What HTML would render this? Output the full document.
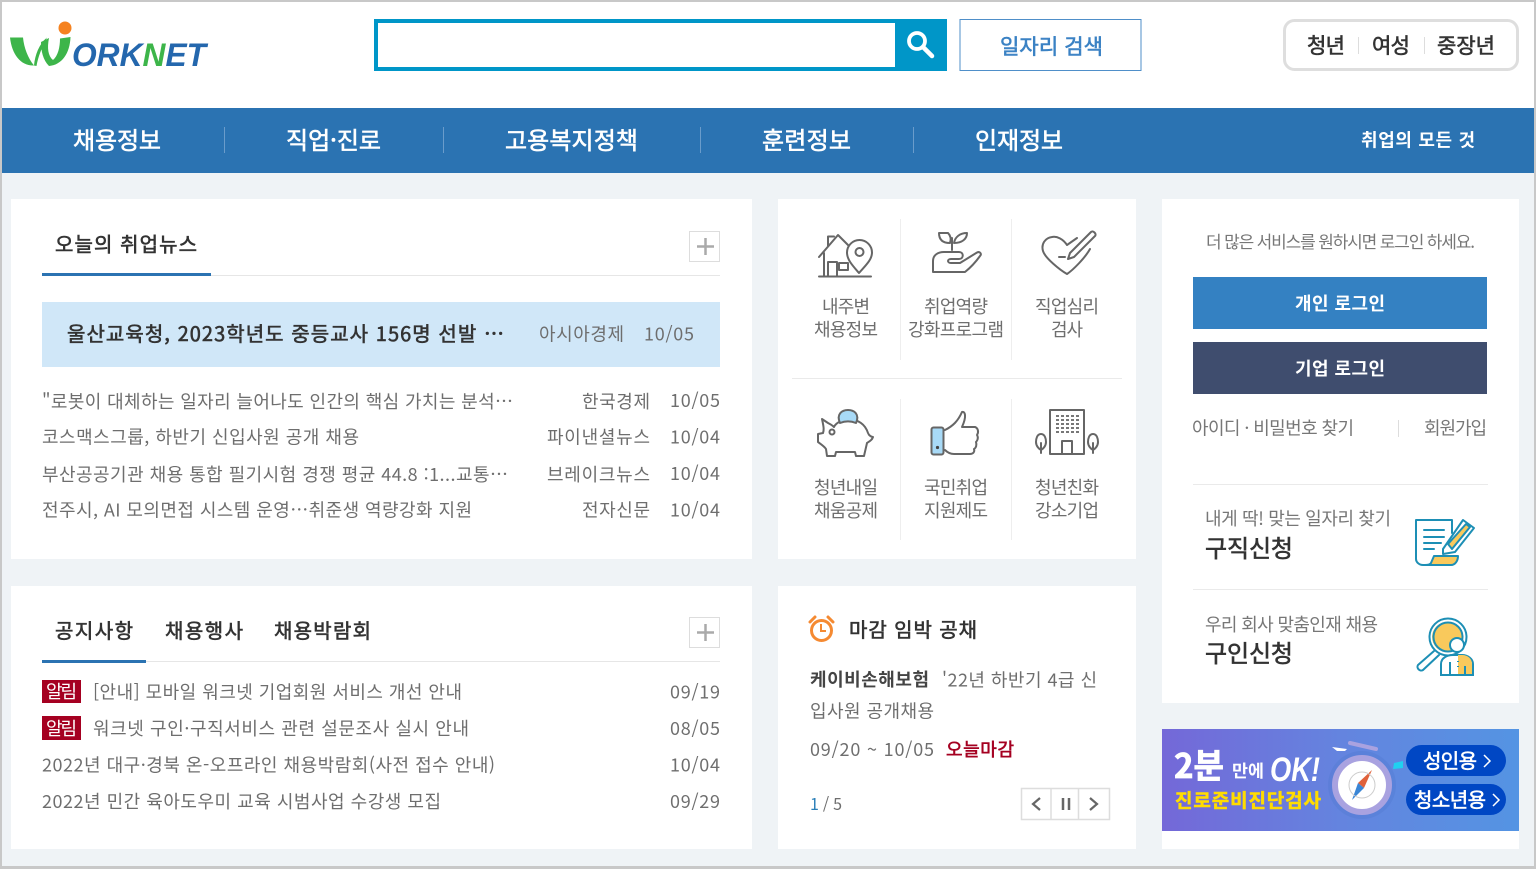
<!DOCTYPE html>
<html lang="ko"><head><meta charset="utf-8"><title>WORKNET</title>
<style>
html,body{margin:0;padding:0;width:1536px;height:869px;overflow:hidden;background:#eff3f6}
svg{display:block}
text{font-family:"Noto Sans CJK KR","Liberation Sans",sans-serif;fill:#6e6e6e;font-size:18px;white-space:pre;transform:translateY(.8px)}
text.n{transform:none}
.m{stroke-width:.6px}
.ic{fill:none;stroke:#666;stroke-width:2;stroke-linecap:round;stroke-linejoin:round}
.t{fill:none;stroke:#1d8fb5;stroke-width:2;stroke-linejoin:round;stroke-linecap:round}
</style></head><body>
<svg width="1536" height="869" viewBox="0 0 1536 869" xmlns="http://www.w3.org/2000/svg">
<defs><linearGradient id="g" x1="0" x2="1" y1="0" y2="0"><stop offset="0" stop-color="#7468d8"/><stop offset=".5" stop-color="#6484df"/><stop offset="1" stop-color="#5494e3"/></linearGradient></defs>
<rect width="1536" height="869" fill="#eff3f6"/>
<rect x="2" y="2" width="1532" height="106" fill="#fff"/>
<rect x="2" y="108" width="1532" height="65" fill="#2b73b2"/>

<!-- logo -->
<circle cx="65" cy="28" r="6.500" fill="#f58220"/>
<path fill="#3db54a" d="M10 37.500L23 37.500C24 48 28 58 34 65.500C21 66 12 55 10 37.500Z"/>
<path fill="#3db54a" d="M34 65.500C35 55 39 44 47 37.500C42 47 38 57 36.500 66Z"/>
<path fill="#3db54a" d="M41 42L49 38C47 48 48 56 53 60C58 56 60 47 60 38.500L70.500 37C70 53 62 65 49 66C43 60 41 51 41 42Z"/>
<text x="72" y="65" textLength="134" lengthAdjust="spacingAndGlyphs" style="font-family:'Liberation Sans',sans-serif;font-style:italic;font-size:32px;font-weight:700;fill:#2467ad">ORK<tspan style="fill:#3db54a">N</tspan>ET</text>

<!-- search -->
<rect x="376" y="21" width="569" height="48" fill="#fff" stroke="#0096c8" stroke-width="4"/>
<rect x="895" y="19" width="52" height="52" fill="#0096c8"/>
<circle cx="917" cy="41" r="8" fill="none" stroke="#fff" stroke-width="3.800"/>
<path d="M923 47L932 56" stroke="#fff" stroke-width="4.500" stroke-linecap="round"/>
<rect x="960" y="19.500" width="181" height="51" fill="#fff" stroke="#4f8fc9"/>
<text x="1000" y="53" textLength="103" class="m" style="font-size:21px;fill:#3b82c4;stroke:#3b82c4">일자리 검색</text>
<rect x="1284.500" y="20.500" width="233" height="49" rx="10" fill="#fff" stroke="#dedede" stroke-width="3"/>
<text x="1307" y="53" textLength="38" class="m n" style="font-size:21px;fill:#333;stroke:#333">청년</text>
<text x="1372" y="53" textLength="38" class="m n" style="font-size:21px;fill:#333;stroke:#333">여성</text>
<text x="1437" y="53" textLength="58" class="m n" style="font-size:21px;fill:#333;stroke:#333">중장년</text>
<path d="M1358.500 37v17M1424.500 37v17" stroke="#ddd"/>

<!-- nav -->
<text x="73" y="148" textLength="88" class="m" style="font-size:24px;fill:#fff;stroke:#fff">채용정보</text>
<text x="286" y="148" textLength="95" class="m" style="font-size:24px;fill:#fff;stroke:#fff">직업·진로</text>
<text x="505" y="148" textLength="133" class="m" style="font-size:24px;fill:#fff;stroke:#fff">고용복지정책</text>
<text x="762" y="148" textLength="89" class="m" style="font-size:24px;fill:#fff;stroke:#fff">훈련정보</text>
<text x="975" y="148" textLength="88" class="m" style="font-size:24px;fill:#fff;stroke:#fff">인재정보</text>
<text x="1361" y="146.500" textLength="114" class="n" style="font-size:18px;fill:#fff;font-weight:700">취업의 모든 것</text>
<path d="M224.500 127v26M443.500 127v26M700.500 127v26M913.500 127v26" stroke="#6a9ccb"/>

<!-- cards -->
<g fill="#fff">
<rect x="11" y="199" width="741" height="360"/>
<rect x="778" y="199" width="358" height="360"/>
<rect x="1162" y="199" width="357" height="504"/>
<rect x="11" y="586" width="741" height="263"/>
<rect x="778" y="586" width="358" height="263"/>
<rect x="1162" y="729" width="357" height="120"/>
</g>

<!-- news -->
<text x="55" y="251.500" textLength="142" class="m n" style="font-size:20px;fill:#333;stroke:#333">오늘의 취업뉴스</text>
<path d="M42 275.500H720" stroke="#e6e6e6"/>
<rect x="42" y="273" width="169" height="3" fill="#2b73b2"/>
<rect x="689.500" y="231.500" width="30" height="30" fill="#fff" stroke="#ddd"/>
<path d="M697 246.500H714M705.500 238V255" stroke="#aaa" stroke-width="2.500"/>
<rect x="42" y="302" width="678" height="65" fill="#d0e7f8"/>
<text x="67" y="341" textLength="437" class="m n" style="font-size:20px;fill:#333;stroke:#333">울산교육청, 2023학년도 중등교사 156명 선발 …</text>
<text x="539" y="340.500" textLength="85" class="n">아시아경제</text>
<text x="644" y="340.500" textLength="50" class="n">10/05</text>
<text x="42" y="407" textLength="471">"로봇이 대체하는 일자리 늘어나도 인간의 핵심 가치는 분석…</text>
<text x="582" y="407" textLength="68">한국경제</text><text x="670" y="407" textLength="50" class="n">10/05</text>
<text x="42" y="443.500" textLength="317" class="n">코스맥스그룹, 하반기 신입사원 공개 채용</text>
<text x="547" y="443.500" textLength="103" class="n">파이낸셜뉴스</text><text x="670" y="443.500" textLength="50" class="n">10/04</text>
<text x="42" y="480" textLength="466">부산공공기관 채용 통합 필기시험 경쟁 평균 44.8 :1...교통…</text>
<text x="547" y="480" textLength="103">브레이크뉴스</text><text x="670" y="480" textLength="50" class="n">10/04</text>
<text x="42" y="516.500" textLength="430" class="n">전주시, AI 모의면접 시스템 운영…취준생 역량강화 지원</text>
<text x="582" y="516.500" textLength="68" class="n">전자신문</text><text x="670" y="516.500" textLength="50" class="n">10/04</text>

<!-- notices -->
<text x="55" y="638" textLength="78" class="m n" style="font-size:20px;fill:#333;stroke:#333">공지사항</text>
<text x="165" y="638" textLength="78" class="m n" style="font-size:20px;fill:#333;stroke:#333">채용행사</text>
<text x="274" y="638" textLength="97" class="m n" style="font-size:20px;fill:#333;stroke:#333">채용박람회</text>
<path d="M42 661.500H720" stroke="#e6e6e6"/>
<rect x="42" y="660" width="104" height="3" fill="#2b73b2"/>
<rect x="689.500" y="617.500" width="30" height="30" fill="#fff" stroke="#ddd"/>
<path d="M697 632.500H714M705.500 624V641" stroke="#aaa" stroke-width="2.500"/>
<rect x="42" y="680" width="39" height="23" fill="#a50021"/>
<text x="46" y="698" textLength="31" class="n" style="fill:#fff">알림</text>
<text x="93" y="698.500" textLength="369" class="n">[안내] 모바일 워크넷 기업회원 서비스 개선 안내</text>
<text x="670" y="698.500" textLength="50" class="n">09/19</text>
<rect x="42" y="716" width="39" height="24" fill="#a50021"/>
<text x="46" y="735" textLength="31" class="n" style="fill:#fff">알림</text>
<text x="93" y="735" textLength="376" class="n">워크넷 구인·구직서비스 관련 설문조사 실시 안내</text>
<text x="670" y="735" textLength="50" class="n">08/05</text>
<text x="42" y="771.500" textLength="453" class="n">2022년 대구·경북 온-오프라인 채용박람회(사전 접수 안내)</text>
<text x="670" y="771.500" textLength="50" class="n">10/04</text>
<text x="42" y="808" textLength="399" class="n">2022년 민간 육아도우미 교육 시범사업 수강생 모집</text>
<text x="670" y="808" textLength="50" class="n">09/29</text>

<!-- icon grid -->
<path d="M900.500 219v141M1011.500 219v141M900.500 399v141M1011.500 399v141" stroke="#eee"/>
<path d="M792 378.500H1122" stroke="#eaeaea"/>
<g class="ic">
<path d="M819 257L838 235L851 248M828 246V236.500H834M824 253V276M819 276.500H871M828 276V262H837V276M839 263H848V270H839Z"/>
<path d="M859 273C853 266 847 260 847 252.500A12.500 12.500 0 0 1 872 252.500C872 260 865 266 859 273Z" fill="#fff"/>
<circle cx="859.500" cy="252" r="4"/>
<path d="M952 250V238M950 243C943 243 939 240 939 233H948C951 236 951 240 950 243ZM954 243C955 237 960 233 967 233C967 239 962 243 954 243Z"/>
<path d="M933 272V261C933 255 938 252 944 252H959C964 252 964 259 959 259H951C947 259 947 263 951 263H960L977 252.500C980 251 982 254 980 256C975 263 970 268 965 272Z"/>
<path d="M1067 245C1063 239 1057 236 1052 237C1045 238 1041 244 1043 251C1045 258 1060 270 1067 274C1073 270 1085 258 1090 249M1067 245L1077 238M1059 257H1065"/>
<path d="M1070 253L1091 232C1093 230 1097 234 1095 236L1074 257L1068 259Z" fill="#fff"/>
<path d="M834 427C838 418 862 414 868 433C869 436 872 437 873 437C872 440 870 441 867 443L864 456H856L855 452H836L835 456H827L826 449C824 446 819 443 818 442V434L823 433C824 430 824 428 822 419L828 423C830 424 832 425 834 427Z"/>
<circle cx="832" cy="432" r="2.500"/>
<path d="M945 430C953 426 958 421 962 412C965 411 967 416 962 427H975C978 428 979 432 977 435C979 438 977 441 976 442C977 445 976 448 974 449C975 452 973 454 970 454H954C950 454 947 452 945 450"/>
<path d="M1050 410H1084V454H1050ZM1062 454V441H1072V454"/>
<path d="M1041 434C1037 434 1036 439 1036 442C1036 446 1039 449 1041 450C1043 449 1046 446 1046 442C1046 439 1045 434 1041 434ZM1041 443V453M1093 434C1089 434 1088 439 1088 442C1088 446 1091 449 1093 450C1095 449 1098 446 1098 442C1098 439 1097 434 1093 434ZM1093 443V453"/>
</g>
<path d="M840 423C836 414 842 410 848 410C854 410 860 414 856 423C851 421 845 421 840 423Z" fill="#a8daf7" stroke="#666" stroke-width="2" stroke-linejoin="round"/>
<rect x="931.500" y="427.500" width="12" height="27" rx="2" fill="#a8daf7" stroke="#666" stroke-width="2"/>
<circle cx="937.500" cy="447.500" r="1.600" fill="#444"/>
<path d="M1056 416H1079M1056 420H1079M1056 424H1079M1056 428H1079M1056 432H1079" stroke="#777" stroke-width="2" stroke-dasharray="3 2"/>

<text x="822" y="313" textLength="48" class="n">내주변</text>
<text x="814" y="336" textLength="64" class="n">채용정보</text>
<text x="924" y="313" textLength="64" class="n">취업역량</text>
<text x="908" y="336" textLength="96" class="n">강화프로그램</text>
<text x="1035" y="313" textLength="64" class="n">직업심리</text>
<text x="1051" y="336" textLength="32" class="n">검사</text>
<text x="814" y="494" textLength="64" class="n">청년내일</text>
<text x="814" y="517" textLength="64" class="n">채움공제</text>
<text x="924" y="494" textLength="64" class="n">국민취업</text>
<text x="924" y="517" textLength="64" class="n">지원제도</text>
<text x="1035" y="494" textLength="64" class="n">청년친화</text>
<text x="1035" y="517" textLength="64" class="n">강소기업</text>

<!-- deadline -->
<circle cx="821.500" cy="630.500" r="10" fill="none" stroke="#f58a32" stroke-width="3"/>
<path d="M810 622L815 617M833 622L828 617" stroke="#f58a32" stroke-width="3" stroke-linecap="round"/>
<path d="M821 624V631H826" fill="none" stroke="#f58a32" stroke-width="2"/>
<text x="849" y="637" textLength="128" class="m n" style="font-size:20px;fill:#333;stroke:#333">마감 임박 공채</text>
<text x="810" y="686" textLength="119" class="n" style="fill:#444;font-weight:700">케이비손해보험</text>
<text x="942" y="686.500" textLength="155" class="n">'22년 하반기 4급 신</text>
<text x="810" y="717.500" textLength="124" class="n">입사원 공개채용</text>
<text x="810" y="756" textLength="124" class="n">09/20 ~ 10/05</text>
<text x="946" y="756" textLength="68" class="m n" style="fill:#a50021;stroke:#a50021">오늘마감</text>
<text x="810" y="810" textLength="32" class="n" style="font-size:16px"><tspan style="fill:#2b7fb8">1</tspan> / 5</text>
<rect x="1021.500" y="788.500" width="88" height="31" fill="#fff" stroke="#ddd" stroke-width="1.500"/>
<path d="M1051 788v32M1078.500 788v32" stroke="#ddd" stroke-width="1.500"/>
<path d="M1040 798L1033 804L1040 810M1090 798L1097 804L1090 810" fill="none" stroke="#666" stroke-width="2.200"/>
<path d="M1063 798v12M1069 798v12" stroke="#666" stroke-width="2.500"/>

<!-- login -->
<text x="1206" y="247" textLength="269" style="font-size:17px;fill:#777">더 많은 서비스를 원하시면 로그인 하세요.</text>
<rect x="1193" y="277" width="294" height="52" fill="#3481c2"/>
<rect x="1193" y="342" width="294" height="52" fill="#3f4d6e"/>
<text x="1295" y="309" textLength="90" style="fill:#fff;font-weight:700">개인 로그인</text>
<text x="1295" y="374" textLength="90" style="fill:#fff;font-weight:700">기업 로그인</text>
<text x="1192" y="434.500" textLength="162" class="n" style="fill:#777">아이디 · 비밀번호 찾기</text>
<text x="1424" y="434.500" textLength="63" class="n" style="fill:#777">회원가입</text>
<path d="M1398.500 420v17" stroke="#ddd"/>
<path d="M1193 484.500H1488M1193 589.500H1488" stroke="#eaeaea"/>
<text x="1205" y="524" textLength="186" style="fill:#777">내게 딱! 맞는 일자리 찾기</text>
<text x="1205" y="557" textLength="88" class="m n" style="font-size:24px;fill:#333;stroke:#333">구직신청</text>
<text x="1205" y="630" textLength="173" style="fill:#777">우리 회사 맞춤인재 채용</text>
<text x="1205" y="662" textLength="88" class="m n" style="font-size:24px;fill:#333;stroke:#333">구인신청</text>
<!-- doc icon -->
<path d="M1430 564L1434 556H1458L1456 561C1455 563 1453 564 1451 564Z" fill="#f9c95c"/>
<g class="t">
<path d="M1416 520H1452V533M1416 520V559C1416 562 1419 565 1423 565H1451C1455 565 1458 561 1458 556H1434L1431 563C1430 565 1427 565 1425 565M1424 530H1444M1424 537H1444M1424 543H1441M1424 549H1434"/>
<path d="M1443 549L1463 520L1474 528L1455 552L1443 554Z" fill="#fff"/>
<path d="M1448 544L1466 524L1470 527L1452 549Z" fill="#f9c95c"/>
</g>
<!-- person icon -->
<circle cx="1447" cy="637" r="15" fill="#f9c95c"/>
<g class="t">
<circle cx="1448" cy="637" r="18.500"/><circle cx="1448" cy="637" r="14.500"/>
<path d="M1434 651L1418 665C1416 668 1420 672 1423 670L1439 655"/>
</g>
<circle cx="1457" cy="645" r="7" fill="#fff" stroke="#1d8fb5" stroke-width="2"/>
<path d="M1441 675V664C1441 658 1447 655 1453 655H1462C1468 655 1473 659 1473 664V675Z" fill="#fff" stroke="#1d8fb5" stroke-width="2"/>
<path d="M1458 655H1462C1468 655 1472 659 1472 664V674H1458Z" fill="#f9c95c"/>
<path d="M1450 662V675M1465 666V675M1458 661v1M1458 666v1" stroke="#1d8fb5" stroke-width="2" fill="none"/>

<!-- banner -->
<rect x="1162" y="729" width="357" height="102" fill="url(#g)"/>
<text x="1174" y="777" textLength="50" lengthAdjust="spacingAndGlyphs" style="font-size:34px;fill:#fff;stroke:#fff;stroke-width:.8px;font-weight:700">2분</text>
<text x="1232" y="776" textLength="32" lengthAdjust="spacingAndGlyphs" style="font-size:17px;fill:#fff;font-weight:700">만에</text>
<text x="1270" y="780" textLength="50" lengthAdjust="spacingAndGlyphs" style="font-family:'Liberation Sans',sans-serif;font-size:34px;fill:#fff;font-weight:700;font-style:italic">OK!</text>
<text x="1175" y="806" textLength="146" style="font-size:19px;fill:#ffdc00;stroke:#ffdc00;stroke-width:.5px;font-weight:700">진로준비진단검사</text>
<circle cx="1362" cy="785" r="34" fill="#4f78cf" opacity=".35"/>
<circle cx="1362" cy="785" r="27" fill="#fff" stroke="#a9a2e0" stroke-width="6"/>
<path d="M1350 743L1376 749" stroke="#a9a2e0" stroke-width="4" stroke-linecap="round"/>
<path d="M1332 747L1347 749L1345 751L1337 751Z" fill="#fff"/>
<path d="M1394 763L1403 761L1403 768L1393 769Z" fill="#20d0f0"/>
<path d="M1372 770L1364 788L1358 783Z" fill="#e0623c"/>
<path d="M1352 800L1358 783L1364 788Z" fill="#3a86d6"/>
<circle cx="1362" cy="785" r="13" fill="none" stroke="#ccc" stroke-width="1"/>
<rect x="1406" y="745" width="100" height="31" rx="15.500" fill="#0047c4"/>
<rect x="1406" y="784" width="100" height="31" rx="15.500" fill="#0047c4"/>
<text x="1423" y="768" textLength="54" class="m n" style="font-size:20px;fill:#fff;stroke:#fff">성인용</text>
<text x="1414" y="807" textLength="72" class="m n" style="font-size:20px;fill:#fff;stroke:#fff">청소년용</text>
<path d="M1484 755L1490 761L1484 767M1493 794L1499 800L1493 806" fill="none" stroke="#fff" stroke-width="1.500"/>

<!-- frame -->
<rect x="1" y="1" width="1534" height="866" fill="none" stroke="#c8c8c8" stroke-width="2"/>
<rect x="0" y="866" width="1536" height="3" fill="#c8c8c8"/>
</svg>
</body></html>
